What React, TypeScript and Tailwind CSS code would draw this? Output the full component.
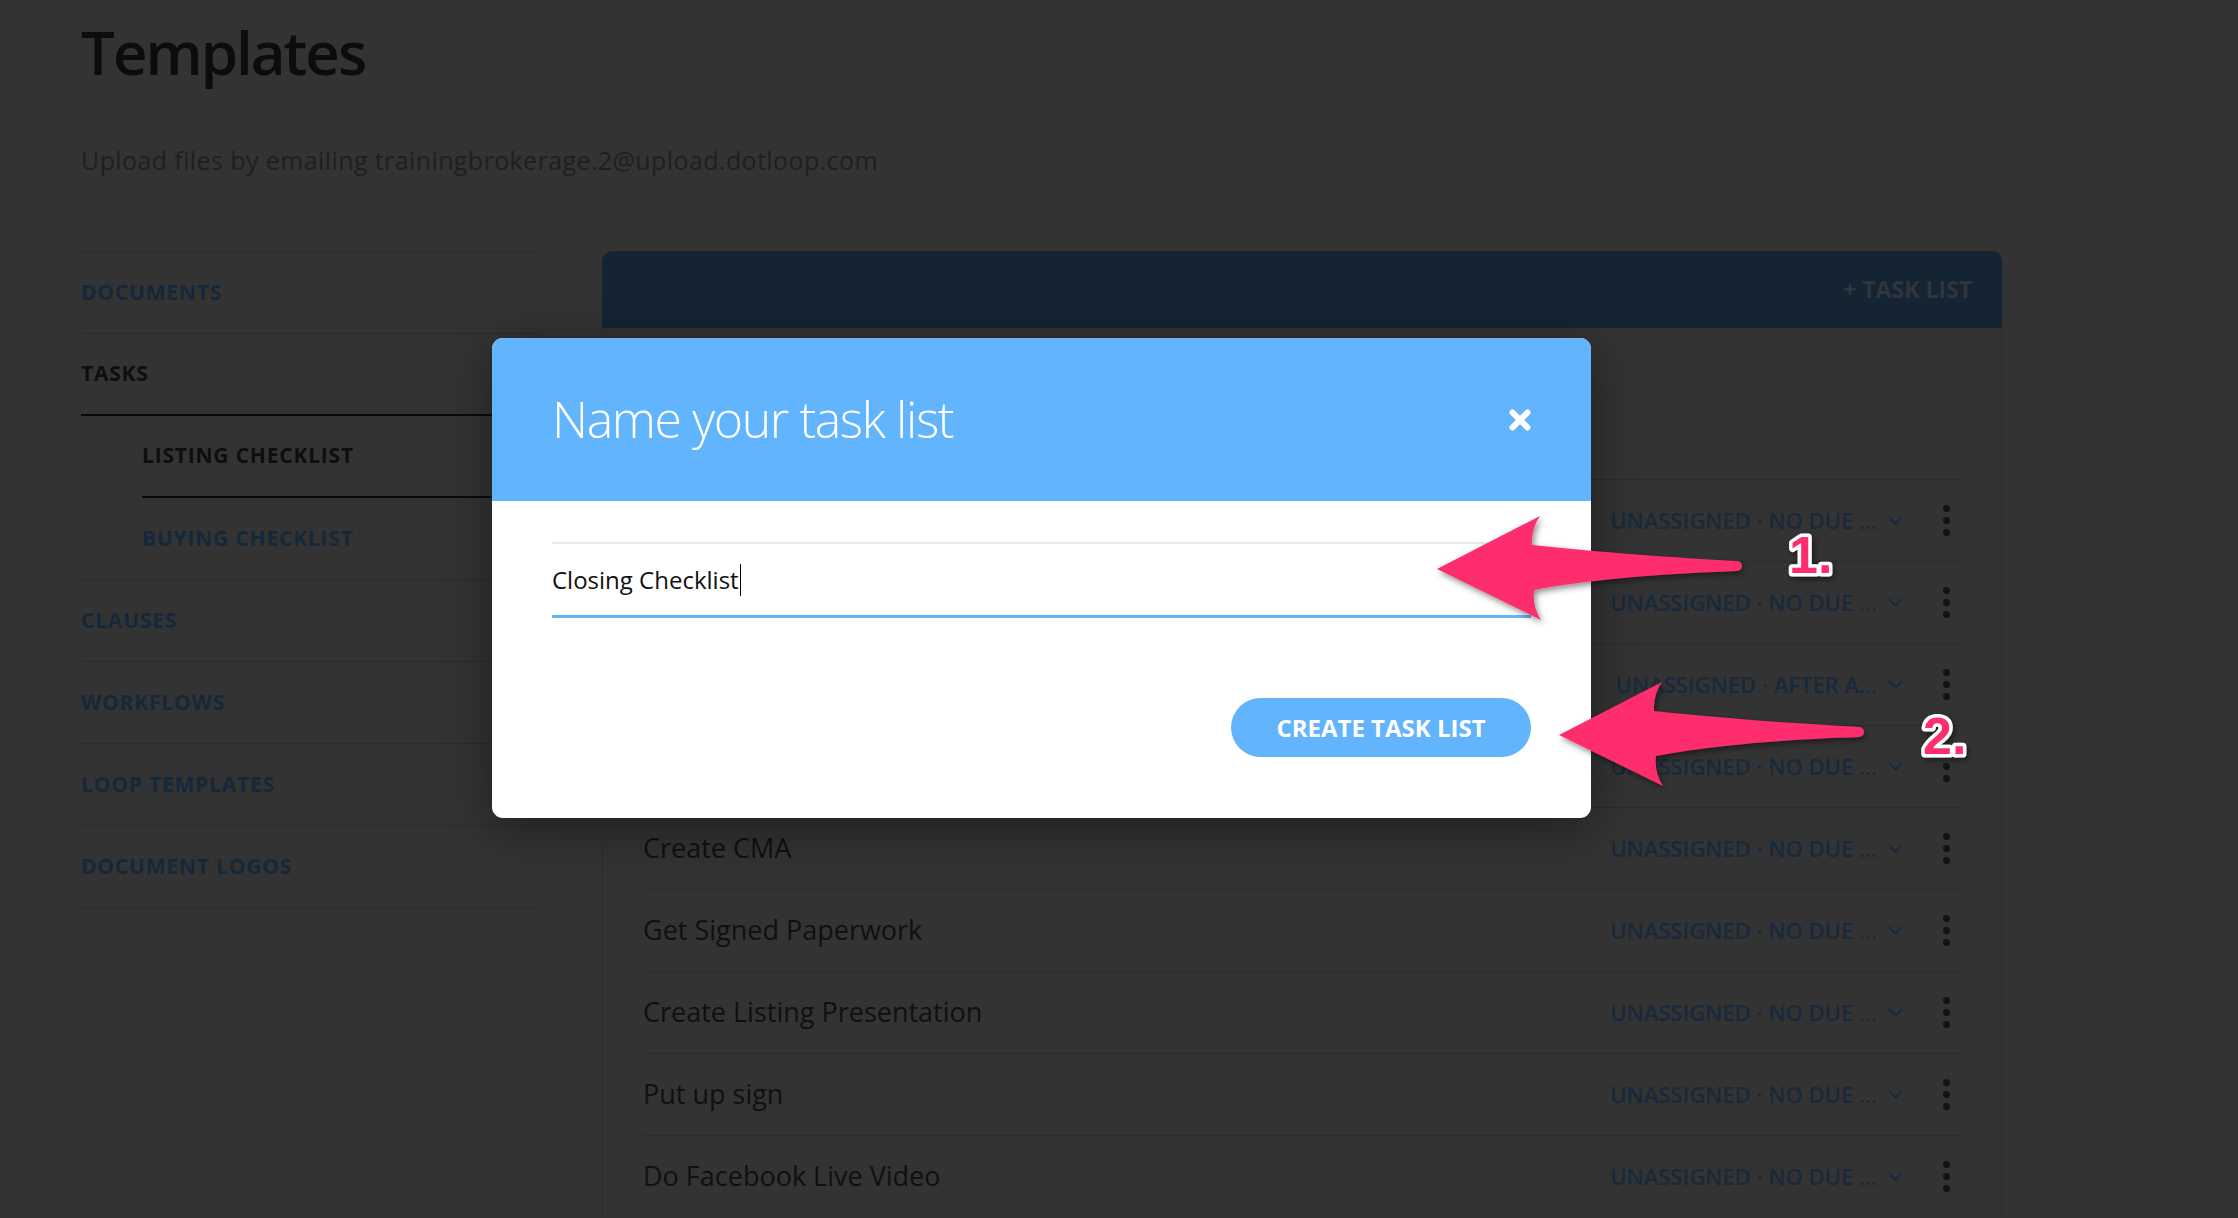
import React from "react"

const NO_DUE = "UNASSIGNED · NO DUE ..."
const AFTER = "UNASSIGNED · AFTER A..."

const tasks = [
  { name: "Schedule Listing Appointment", status: NO_DUE },
  { name: "Prepare Listing Agreement", status: NO_DUE },
  { name: "Walk Through Property", status: AFTER },
  { name: "Take Listing Photos", status: NO_DUE },
  { name: "Create CMA", status: NO_DUE },
  { name: "Get Signed Paperwork", status: NO_DUE },
  { name: "Create Listing Presentation", status: NO_DUE },
  { name: "Put up sign", status: NO_DUE },
  { name: "Do Facebook Live Video", status: NO_DUE },
]

function Chevron() {
  return (
    <svg width="15" height="9" viewBox="0 0 15 9" className="ml-[11px]">
      <path d="M1 1 L7.5 7.5 L14 1" fill="none" stroke="#17293b" strokeWidth="2" />
    </svg>
  )
}

function Kebab() {
  return (
    <div className="ml-[40px] flex flex-col gap-[5px]">
      <span className="block h-[7px] w-[7px] rounded-full bg-[#131313]" />
      <span className="block h-[7px] w-[7px] rounded-full bg-[#131313]" />
      <span className="block h-[7px] w-[7px] rounded-full bg-[#131313]" />
    </div>
  )
}

function NavItem({
  label,
  active,
  indent,
  sub,
  dark,
}: {
  label: string
  active?: boolean
  indent?: boolean
  sub?: boolean
  dark?: boolean
}) {
  return (
    <div
      className={`flex h-[82px] items-center ${sub ? "ml-[61px]" : ""} ${indent ? "pl-[61px]" : ""} ${
        dark ? "border-b-2 border-[#0a0a0a]" : "border-b border-[#2b2b2b]"
      }`}
    >
      <span
        className={`text-[21px] font-bold uppercase tracking-[0.8px] ${active ? "text-[#0e0e0e]" : "text-[#15283a]"}`}
      >
        {label}
      </span>
    </div>
  )
}

function Arrow({ x, y }: { x: number; y: number }) {
  return (
    <path
      transform={`translate(${x} ${y})`}
      d="M0,0 L103,-53 Q94,-40 95,-24 C160,-17 240,-11 300,-8 A5,5 0 0 1 300,2 C240,4 160,9 97,21 Q95,37 104,51 Z"
      fill="#fe2e6e"
      filter="url(#arrowShadow)"
    />
  )
}

export default function App() {
  return (
    <div className="relative h-screen overflow-hidden bg-[#333333] font-['Open_Sans',sans-serif]">
      <div className="pl-[81px] pt-[22px]">
        <h1 className="text-[60px] font-semibold leading-[60px] tracking-[-2px] text-[#0c0c0c]">Templates</h1>
        <p className="mt-[66px] text-[25px] font-normal leading-[25px] tracking-[0.4px] text-[#1f1f1f]">
          Upload files by emailing trainingbrokerage.2@upload.dotloop.com
        </p>
      </div>

      <div className="mt-[78px] flex pl-[81px]">
        <nav className="w-[460px] border-t border-[#2b2b2b]">
          <NavItem label="Documents" />
          <NavItem label="Tasks" active dark />
          <NavItem label="Listing Checklist" active sub dark />
          <NavItem label="Buying Checklist" indent />
          <NavItem label="Clauses" />
          <NavItem label="Workflows" />
          <NavItem label="Loop Templates" />
          <NavItem label="Document Logos" />
        </nav>

        <section className="ml-[61px] w-[1400px]">
          <div className="flex h-[77px] items-center justify-end rounded-t-[10px] bg-[#152433] pr-[30px]">
            <span className="text-[23px] font-bold uppercase text-[#2f353b]">+ Task List</span>
          </div>
          <div className="border-x border-[#2d2d2d] pl-[40px] pr-[39px]">
            <div className="flex h-[151px] items-center">
              <h2 className="text-[30px] font-semibold text-[#101010]">Listing Checklist</h2>
            </div>
            {tasks.map((t) => (
              <div key={t.name} className="flex h-[82px] items-center justify-between border-t border-[#2b2b2b] pr-[12px]">
                <span className="text-[27px] font-medium text-[#101010]">{t.name}</span>
                <div className="flex items-center">
                  <span className="text-[22px] font-semibold text-[#17293b]">{t.status}</span>
                  <Chevron />
                  <Kebab />
                </div>
              </div>
            ))}
          </div>
        </section>
      </div>

      {/* modal */}
      <div className="absolute left-[492px] top-[338px] w-[1099px] rounded-[11px] bg-white shadow-[0_10px_50px_rgba(0,0,0,0.4)]">
        <div className="flex h-[163px] items-center justify-between rounded-t-[11px] bg-[#62b4fc] pl-[60px] pr-[59px]">
          <h3 className="text-[50px] font-light tracking-[-1.4px] text-white">Name your task list</h3>
          <svg width="24" height="24" viewBox="0 0 24 24">
            <path d="M4.5 4.5 L19.5 19.5 M19.5 4.5 L4.5 19.5" stroke="#fff" strokeWidth="6" strokeLinecap="round" />
          </svg>
        </div>
        <div className="px-[60px] pb-[61px] pt-[41px]">
          <div className="flex h-[76px] items-center border-b-[3px] border-t-2 border-b-[#62b4fc] border-t-[#e8e8e8]">
            <span className="text-[24px] text-[#111]">Closing Checklist</span>
            <span className="ml-[1px] block h-[32px] w-[1.5px] bg-black" />
          </div>
          <div className="mt-[80px] flex justify-end">
            <button className="h-[59px] w-[300px] rounded-full bg-[#62b4fc] text-[24px] font-bold uppercase text-white">
              Create Task List
            </button>
          </div>
        </div>
      </div>

      {/* annotations */}
      <svg className="pointer-events-none absolute inset-0 h-full w-full" viewBox="0 0 2238 1218">
        <defs>
          <filter id="arrowShadow" x="-20%" y="-50%" width="140%" height="200%">
            <feDropShadow dx="2" dy="3" stdDeviation="3" floodColor="#000" floodOpacity="0.45" />
          </filter>
        </defs>
        <Arrow x={1437} y={569} />
        <Arrow x={1559} y={735} />
        <g
          fontFamily="'Liberation Sans', Arial, sans-serif"
          fontWeight="700"
          fontSize="52"
          fill="#fe2e6e"
          stroke="#fff"
          strokeWidth="7"
          strokeLinejoin="round"
          paintOrder="stroke"
          filter="url(#arrowShadow)"
        >
          <text x="1789" y="573">1.</text>
          <text x="1923" y="754">2.</text>
        </g>
      </svg>
    </div>
  )
}
